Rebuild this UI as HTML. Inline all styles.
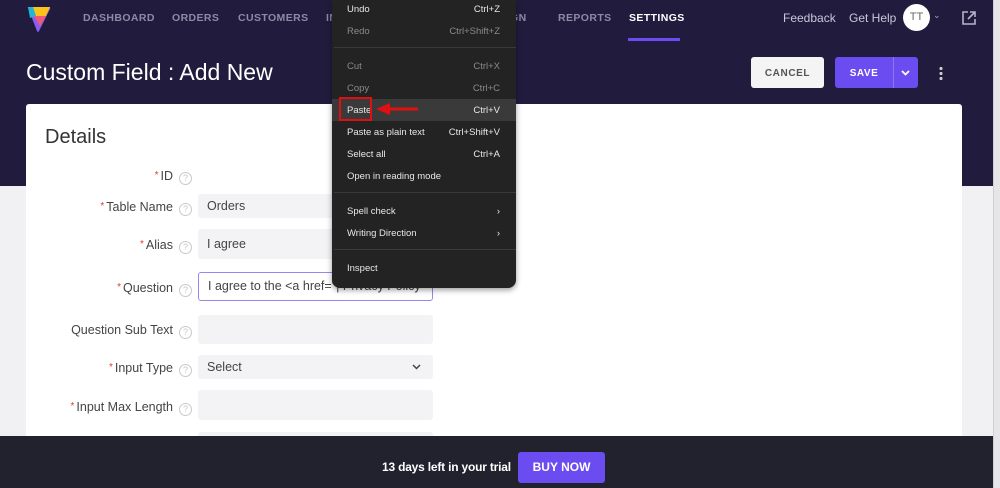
<!DOCTYPE html>
<html><head><meta charset="utf-8"><style>
*{box-sizing:border-box;margin:0;padding:0}
body{width:1000px;height:488px;overflow:hidden;background:#f1f1f3;font-family:"Liberation Sans",sans-serif;position:relative}
.hdr{position:absolute;left:0;top:0;width:993px;height:186px;background:#211c3e}
.sb{position:absolute;right:0;top:0;width:7px;height:488px;background:#e6e6e8;border-left:1px solid #cfcfd3}
.nav{position:absolute;top:12px;font-size:10.5px;font-weight:bold;color:#8d8aa6;letter-spacing:.4px}
.title{position:absolute;left:26px;top:59px;font-size:23px;color:#fff}
.card{position:absolute;left:26px;top:104px;width:936px;height:340px;background:#fff;border-radius:3px}
.lbl{position:absolute;right:0;font-size:12.5px;color:#444;text-align:right}
.lbl b{color:#e03a3a;font-weight:normal;font-size:10px;vertical-align:2px;margin-right:2px}
.q{display:inline-block;width:13px;height:13px;border:1px solid #c9c9c9;border-radius:50%;color:#c9c9c9;font-size:9px;text-align:center;line-height:11px;margin-left:6px;vertical-align:-1px}
.inp{position:absolute;left:198px;width:235px;background:#f3f3f5;border-radius:3px;font-size:12.5px;color:#444;padding-left:9px}
.menu{position:absolute;left:332px;top:0;width:184px;height:288px;background:#232323;border-radius:0 0 8px 8px;box-shadow:0 2px 6px rgba(0,0,0,.4);font-size:9.5px;color:#e8e8e8}
.mi{position:absolute;left:15px;right:16px;height:20px;line-height:20px}
.mi span{float:right}
.dim{color:#8a8a8a}
.sep{position:absolute;left:2px;right:0;height:1px;background:#3a3a3a}
.bar{position:absolute;left:0;top:436px;width:993px;height:52px;background:#22212e}
</style></head><body>
<div class="hdr"></div>
<div class="sb"></div>
<svg style="position:absolute;left:24px;top:4px" width="28" height="30" viewBox="0 0 28 30"><path d="M4 4Q3 3 5 3H25Q27 3 26 5L15 27Q14 29 13 27Z" fill="#8a5cf0"/><polygon points="7,3 26,3 22,12 12,12" fill="#fbc21a"/><polygon points="4,3 9,3 12,12 6,14" fill="#22b6d6"/><polygon points="10,12 22,12 16,22" fill="#f05a78"/></svg>
<div class="nav" style="left:83px">DASHBOARD</div>
<div class="nav" style="left:172px">ORDERS</div>
<div class="nav" style="left:238px">CUSTOMERS</div>
<div class="nav" style="left:326px">IN</div>
<div class="nav" style="left:510px">GN</div>
<div class="nav" style="left:558px">REPORTS</div>
<div class="nav" style="left:629px;color:#fff">SETTINGS</div>
<div style="position:absolute;left:628px;top:38px;width:52px;height:3px;background:#6c4cf2"></div>
<div style="position:absolute;left:783px;top:11px;font-size:12px;color:#c9c7d8">Feedback</div>
<div style="position:absolute;left:849px;top:11px;font-size:12px;color:#c9c7d8">Get Help</div>
<div style="position:absolute;left:903px;top:4px;width:27px;height:27px;border-radius:50%;background:#fff;color:#666;font-size:11px;text-align:center;line-height:27px">TT</div>
<div style="position:absolute;left:933px;top:10px;color:#aaa;font-size:9px">&#8964;</div>
<svg style="position:absolute;left:961px;top:10px" width="16" height="16" viewBox="0 0 16 16" fill="none" stroke="#b5b3c6" stroke-width="1.6"><path d="M7 2H2v12h12V9"/><path d="M9 2h5v5M14 2L7 9"/></svg>
<div class="title">Custom Field : Add New</div>
<div style="position:absolute;left:751px;top:57px;width:73px;height:31px;background:#f4f4f4;border-radius:3px;font-size:10px;font-weight:bold;color:#555;text-align:center;line-height:33px;letter-spacing:.6px">CANCEL</div>
<div style="position:absolute;left:835px;top:57px;width:83px;height:31px;background:#6b4cf0;border-radius:3px"></div>
<div style="position:absolute;left:835px;top:57px;width:58px;height:31px;font-size:10px;font-weight:bold;color:#fff;text-align:center;line-height:33px;letter-spacing:.5px">SAVE</div>
<div style="position:absolute;left:893px;top:57px;width:1px;height:31px;background:#8c74f4"></div>
<svg style="position:absolute;left:900px;top:69px" width="11" height="8" viewBox="0 0 11 8"><path d="M2 2l3.5 3.5L9 2" stroke="#fff" stroke-width="1.8" fill="none"/></svg>
<div style="position:absolute;left:939px;top:66px;width:4px;height:15px;background:radial-gradient(circle,#ccc 1.5px,transparent 1.6px) 0 0/4px 5px"></div>
<div class="card">
<div style="position:absolute;left:19px;top:22px;font-size:20px;color:#333">Details</div>
<div style="position:absolute;left:0;top:0;width:166px;height:340px">
<div class="lbl" style="top:65px"><b>*</b>ID<span class="q">?</span></div>
<div class="lbl" style="top:96px"><b>*</b>Table Name<span class="q">?</span></div>
<div class="lbl" style="top:134px"><b>*</b>Alias<span class="q">?</span></div>
<div class="lbl" style="top:177px"><b>*</b>Question<span class="q">?</span></div>
<div class="lbl" style="top:219px">Question Sub Text<span class="q">?</span></div>
<div class="lbl" style="top:257px"><b>*</b>Input Type<span class="q">?</span></div>
<div class="lbl" style="top:296px"><b>*</b>Input Max Length<span class="q">?</span></div>
</div>
</div>
<div class="inp" style="top:194px;height:24px;line-height:24px">Orders</div>
<div class="inp" style="top:229px;height:30px;line-height:30px">I agree</div>
<div class="inp" style="top:272px;height:29px;line-height:27px;background:#fff;border:1.5px solid #9b85f0">I agree to the &lt;a href="| Privacy Policy</div>
<div class="inp" style="top:315px;height:29px"></div>
<div class="inp" style="top:355px;height:24px;line-height:24px">Select<svg style="position:absolute;right:12px;top:9px" width="9" height="6" viewBox="0 0 9 6"><path d="M1 1l3.5 3.5L8 1" stroke="#444" stroke-width="1.5" fill="none"/></svg></div>
<div class="inp" style="top:390px;height:30px"></div>
<div class="inp" style="top:432px;height:10px"></div>
<div class="menu">
<div class="mi" style="top:0px">Undo<span>Ctrl+Z</span></div>
<div class="mi dim" style="top:22px">Redo<span>Ctrl+Shift+Z</span></div>
<div class="sep" style="top:47px"></div>
<div class="mi dim" style="top:57px">Cut<span>Ctrl+X</span></div>
<div class="mi dim" style="top:79px">Copy<span>Ctrl+C</span></div>
<div style="position:absolute;left:0;right:0;top:99px;height:22px;background:#3a3a3a"></div>
<div class="mi" style="top:101px">Paste<span>Ctrl+V</span></div>
<div style="position:absolute;left:7px;top:97px;width:33px;height:24px;border:2.5px solid #e01010"></div>
<svg style="position:absolute;left:44px;top:103px" width="44" height="12" viewBox="0 0 44 12"><path d="M12 6H42" stroke="#e01010" stroke-width="3"/><polygon points="0,6 14,0 14,12" fill="#e01010"/></svg>
<div class="mi" style="top:123px">Paste as plain text<span>Ctrl+Shift+V</span></div>
<div class="mi" style="top:145px">Select all<span>Ctrl+A</span></div>
<div class="mi" style="top:167px">Open in reading mode</div>
<div class="sep" style="top:192px"></div>
<div class="mi" style="top:202px">Spell check<span>&#8250;</span></div>
<div class="mi" style="top:224px">Writing Direction<span>&#8250;</span></div>
<div class="sep" style="top:249px"></div>
<div class="mi" style="top:259px">Inspect</div>
</div>
<div class="bar">
<div style="position:absolute;left:382px;top:24px;font-size:12px;font-weight:bold;color:#fff;letter-spacing:-.2px">13 days left in your trial</div>
<div style="position:absolute;left:518px;top:16px;width:87px;height:31px;background:#6b4cf0;border-radius:3px;color:#fff;font-size:12px;font-weight:bold;text-align:center;line-height:31px">BUY NOW</div>
</div>
</body></html>
